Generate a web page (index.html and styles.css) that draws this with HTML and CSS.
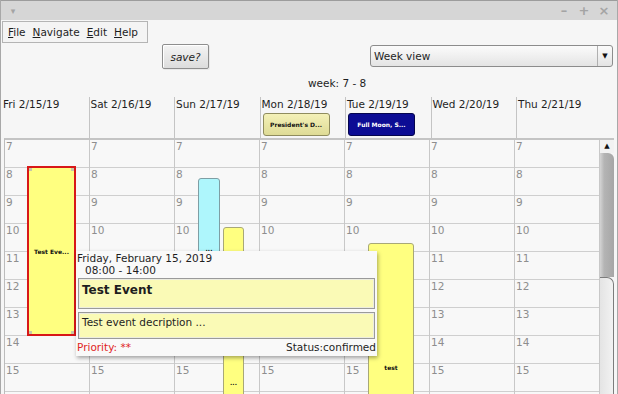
FILE: index.html
```html
<!DOCTYPE html>
<html lang="en">
<head>
	<meta charset="UTF-8">
	<title>Calendar</title>
	<link rel="stylesheet" href="styles.css">
</head>
<body>
	<div class="window">
		<div class="titlebar">
			<span class="tb-menu">&#9662;</span>
			<span class="tb-btns"><span>&ndash;</span><span>+</span><span>&times;</span></span>
		</div>

		<div class="menubar">
			<span><u>F</u>ile</span>
			<span><u>N</u>avigate</span>
			<span><u>E</u>dit</span>
			<span><u>H</u>elp</span>
		</div>

		<div class="toolbar">
			<button class="save">save?</button>
			<div class="select">
				<span class="select-text">Week view</span>
				<span class="select-arrow">&#9660;</span>
			</div>
		</div>

		<div class="week">week: 7 - 8</div>

		<div class="days">
			<div class="day">Fri 2/15/19</div>
			<div class="day">Sat 2/16/19</div>
			<div class="day">Sun 2/17/19</div>
			<div class="day">Mon 2/18/19
				<div class="allday holiday">President's D...</div>
			</div>
			<div class="day">Tue 2/19/19
				<div class="allday moon">Full Moon, S...</div>
			</div>
			<div class="day">Wed 2/20/19</div>
			<div class="day">Thu 2/21/19</div>
		</div>

		<div class="main">
			<div class="grid">
				<div class="col">
					<div class="hour">7</div><div class="hour">8</div><div class="hour">9</div>
					<div class="hour">10</div><div class="hour">11</div><div class="hour">12</div>
					<div class="hour">13</div><div class="hour">14</div><div class="hour">15</div>
					<div class="event yellow selected" style="left:22px;top:26px;width:49px;height:170px">
						Test Eve...
						<i class="handle tl"></i><i class="handle tr"></i><i class="handle bl"></i><i class="handle br"></i>
					</div>
				</div>
				<div class="col">
					<div class="hour">7</div><div class="hour">8</div><div class="hour">9</div>
					<div class="hour">10</div><div class="hour">11</div><div class="hour">12</div>
					<div class="hour">13</div><div class="hour">14</div><div class="hour">15</div>
				</div>
				<div class="col">
					<div class="hour">7</div><div class="hour">8</div><div class="hour">9</div>
					<div class="hour">10</div><div class="hour">11</div><div class="hour">12</div>
					<div class="hour">13</div><div class="hour">14</div><div class="hour">15</div>
					<div class="event cyan" style="left:23px;top:38px;width:22px;height:140px">...</div>
					<div class="event yellow" style="left:48px;top:87px;width:21px;height:310px">...</div>
				</div>
				<div class="col">
					<div class="hour">7</div><div class="hour">8</div><div class="hour">9</div>
					<div class="hour">10</div><div class="hour">11</div><div class="hour">12</div>
					<div class="hour">13</div><div class="hour">14</div><div class="hour">15</div>
				</div>
				<div class="col">
					<div class="hour">7</div><div class="hour">8</div><div class="hour">9</div>
					<div class="hour">10</div><div class="hour">11</div><div class="hour">12</div>
					<div class="hour">13</div><div class="hour">14</div><div class="hour">15</div>
					<div class="event yellow" style="left:23px;top:103px;width:46px;height:248px">test</div>
				</div>
				<div class="col">
					<div class="hour">7</div><div class="hour">8</div><div class="hour">9</div>
					<div class="hour">10</div><div class="hour">11</div><div class="hour">12</div>
					<div class="hour">13</div><div class="hour">14</div><div class="hour">15</div>
				</div>
				<div class="col">
					<div class="hour">7</div><div class="hour">8</div><div class="hour">9</div>
					<div class="hour">10</div><div class="hour">11</div><div class="hour">12</div>
					<div class="hour">13</div><div class="hour">14</div><div class="hour">15</div>
				</div>
			</div>
			<div class="scrollbar">
				<div class="sb-up">&#9650;</div>
				<div class="sb-thumb"></div>
				<div class="sb-track"></div>
			</div>
		</div>

		<div class="popup">
			<div class="pop-date">Friday, February 15, 2019</div>
			<div class="pop-time">08:00 - 14:00</div>
			<div class="pop-box pop-title">Test Event</div>
			<div class="pop-box pop-desc">Test event decription ...</div>
			<div class="pop-foot">
				<span class="priority">Priority: **</span>
				<span>Status:confirmed</span>
			</div>
		</div>
	</div>
</body>
</html>
```

FILE: styles.css
```css
*{
	box-sizing: border-box;
}
body{
	margin: 0;
	width: 618px;
	height: 394px;
	overflow: hidden;
	font-family: "DejaVu Sans", sans-serif;
	font-size: 10.5px;
	color: #1e1e1e;
	background: #f6f6f6;
}
.window{
	position: relative;
	height: 394px;
	border-left: 1px solid #a8a8a8;
	border-right: 1px solid #a8a8a8;
	background: #f6f6f6;
	overflow: hidden;
}

/* title bar */
.titlebar{
	height: 20px;
	border-top: 1px solid #9c9c9c;
	background: #d6d6d6;
	display: flex;
	align-items: center;
	justify-content: space-between;
	padding: 0 3px 0 6px;
	color: #a4a4a4;
}
.tb-menu{
	width: 12px;
	text-align: center;
	font-size: 9px;
}
.tb-btns{
	display: flex;
}
.tb-btns span{
	width: 20px;
	text-align: center;
	font-size: 13px;
	font-weight: bold;
}

/* menu + toolbar */
.menubar{
	margin: 1px 0 0 1px;
	width: 146px;
	height: 22px;
	border: 1px solid #b4b4b4;
	background: #f4f4f4;
	display: flex;
	align-items: center;
	gap: 7px;
	padding-left: 5px;
	padding-bottom: 1px;
	font-size: 10.5px;
}
.menubar u{
	text-decoration: underline;
	text-underline-offset: 1px;
}
.toolbar{
	display: flex;
	height: 25px;
	margin-top: 1px;
}
.save{
	margin-left: 161px;
	width: 47px;
	height: 25px;
	padding: 0;
	border: 1px solid #8e8e8e;
	border-radius: 2px;
	background: linear-gradient(#f4f4f4, #dcdcdc);
	box-shadow: inset 1px 1px 0 #fff, 1px 1px 0 #e8e8e8;
	font-family: "DejaVu Sans", sans-serif;
	font-size: 10.5px;
	font-style: italic;
	color: #222;
}
.select{
	margin: 1px 4px 0 auto;
	width: 243px;
	height: 22px;
	border: 1px solid #8c8c8c;
	border-radius: 3px;
	background: linear-gradient(#fbfbfb, #e4e4e4);
	display: flex;
	align-items: center;
}
.select-text{
	flex: 1;
	padding-left: 3px;
	padding-bottom: 1px;
}
.select-arrow{
	width: 15px;
	height: 100%;
	border-left: 1px solid #b0b0b0;
	display: flex;
	align-items: center;
	justify-content: center;
	font-size: 7px;
	color: #111;
}

.week{
	margin: 7px 0 0 307px;
	height: 14px;
	line-height: 14px;
}

/* day headers */
.days{
	display: grid;
	grid-template-columns: repeat(7, 85.5px);
	margin: 7px 0 0 2px;
	height: 41px;
}
.day{
	line-height: 14px;
	white-space: nowrap;
	border-left: 1px solid #c4c4c4;
	padding-left: 1px;
}
.day:first-child{
	border-left: none;
	padding-left: 0;
}
.allday{
	margin: 2px 0 0 1px;
	width: 67px;
	height: 23px;
	border-radius: 3px;
	display: flex;
	align-items: center;
	justify-content: center;
	font-size: 6px;
	font-weight: bold;
	line-height: 8px;
}
.holiday{
	background: linear-gradient(#f4f1b8, #dedb96);
	border: 1px solid #8f8c5e;
	color: #111;
}
.moon{
	background: #0c0c94;
	border: 1px solid #05054e;
	color: #fff;
}

/* hour grid */
.main{
	display: flex;
	margin: 0 0 0 3px;
}
.grid{
	display: grid;
	grid-template-columns: repeat(7, 85px);
	border-left: 1px solid #bcbcbc;
	border-top: 2px solid #c4c4c4;
	background: #f8f8f8;
}
.col{
	position: relative;
	border-right: 1px solid #c8c8c8;
}
.hour{
	height: 28px;
	border-bottom: 1px solid #cfcfcf;
	padding-left: 1px;
	line-height: 12px;
	color: #8e8e8e;
}

.event{
	position: absolute;
	display: flex;
	align-items: center;
	justify-content: center;
	font-size: 6px;
	font-weight: bold;
	color: #111;
	border-radius: 3px;
	white-space: nowrap;
	overflow: hidden;
}
.yellow{
	background: #ffff80;
	border: 1px solid #a8a878;
}
.cyan{
	background: #aef6fc;
	border: 1px solid #7e9ea4;
}
.selected{
	border: 2px solid #d81818;
	border-radius: 0;
	overflow: visible;
}
.handle{
	position: absolute;
	width: 3px;
	height: 3px;
	background: #c8c8a8;
}
.tl{ left: 0; top: 0; }
.tr{ right: 0; top: 0; }
.bl{ left: 0; bottom: 0; }
.br{ right: 0; bottom: 0; }

/* scrollbar */
.scrollbar{
	width: 14px;
	display: flex;
	flex-direction: column;
	border-top: 2px solid #c4c4c4;
}
.sb-up{
	height: 13px;
	font-size: 7px;
	text-align: center;
	line-height: 13px;
	color: #111;
	background: #f2f2f2;
}
.sb-thumb{
	height: 124px;
	border-top-right-radius: 6px;
	background: linear-gradient(to right, #d4d4d4, #b4b4b4 30%, #a6a6a6);
}
.sb-track{
	height: 140px;
	border-top-right-radius: 7px;
	border-top: 1px solid #7c7c7c;
	border-right: 1px solid #7c7c7c;
	background: linear-gradient(to right, #e4e4e4, #f2f2f2);
}

/* popup */
.popup{
	position: absolute;
	left: 75px;
	top: 251px;
	width: 301px;
	height: 105px;
	padding: 0 1px;
	background: #f9f9f9;
	box-shadow: 1px 2px 4px rgba(0, 0, 0, 0.35);
}
.pop-date{
	margin-top: 1px;
	line-height: 12px;
}
.pop-time{
	padding-left: 8px;
	line-height: 12px;
}
.pop-box{
	margin: 0 1px;
	border: 1px solid #9a9a9a;
	box-shadow: inset 0 0 0 1px #ecece0;
	background: #fafab6;
	padding-left: 3px;
}
.pop-title{
	margin-top: 2px;
	height: 31px;
	padding-top: 4px;
	font-size: 12px;
	font-weight: bold;
	line-height: 15px;
}
.pop-desc{
	margin-top: 3px;
	height: 27px;
	padding-top: 3px;
	line-height: 13px;
}
.pop-foot{
	display: flex;
	justify-content: space-between;
	line-height: 13px;
	margin-top: 2px;
}
.priority{
	color: #e02424;
}
```
